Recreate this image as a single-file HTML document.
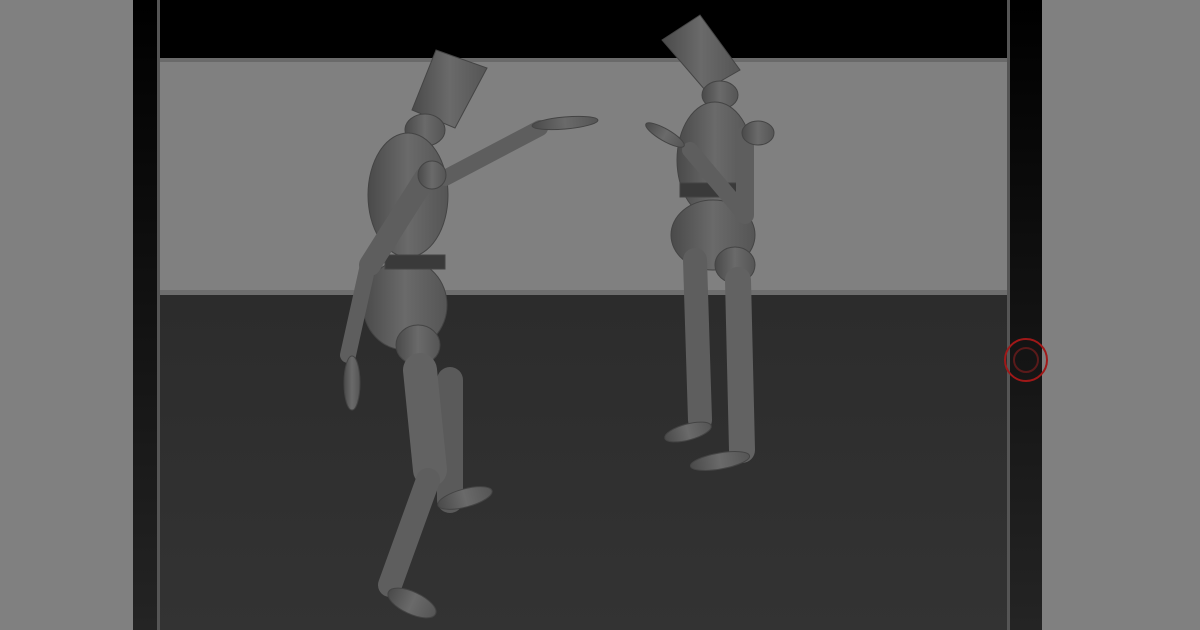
<!DOCTYPE html>
<html><head><style>
html,body{margin:0;padding:0;width:1200px;height:630px;overflow:hidden;background:#808080}
</style></head><body>
<svg width="1200" height="630" viewBox="0 0 1200 630" xmlns="http://www.w3.org/2000/svg">
<defs>
<linearGradient id="bar" x1="0" y1="0" x2="0" y2="1"><stop offset="0" stop-color="#000"/><stop offset="1" stop-color="#242424"/></linearGradient>
<linearGradient id="floor" x1="0" y1="0" x2="0" y2="1"><stop offset="0" stop-color="#2c2c2c"/><stop offset="1" stop-color="#333"/></linearGradient>
<linearGradient id="body" x1="0" y1="0" x2="1" y2="0"><stop offset="0" stop-color="#4a4a4a"/><stop offset="0.5" stop-color="#6a6a6a"/><stop offset="1" stop-color="#555"/></linearGradient>
</defs>
<rect width="1200" height="630" fill="#808080"/>
<rect x="133" y="0" width="26" height="630" fill="url(#bar)"/>
<rect x="1009" y="0" width="33" height="630" fill="url(#bar)"/>
<rect x="157" y="0" width="3" height="630" fill="#555"/>
<rect x="1007" y="0" width="3" height="630" fill="#555"/>
<rect x="160" y="0" width="847" height="58" fill="#000"/>
<rect x="160" y="58" width="847" height="4" fill="#6a6a6a"/>
<rect x="160" y="62" width="847" height="228" fill="#808080"/>
<rect x="160" y="290" width="847" height="5" fill="#6e6e6e"/>
<rect x="160" y="295" width="847" height="335" fill="url(#floor)"/>
<circle cx="1026" cy="360" r="21" fill="none" stroke="#a01818" stroke-width="2"/>
<circle cx="1026" cy="360" r="12" fill="none" stroke="#5a1a1a" stroke-width="2"/>
<g fill="url(#body)" stroke="#444" stroke-width="1" stroke-linecap="round">
<!-- figure 1 -->
<polygon points="436,50 487,68 455,128 412,110"/>
<ellipse cx="425" cy="130" rx="20" ry="16"/>
<ellipse cx="408" cy="195" rx="40" ry="62"/>
<ellipse cx="405" cy="305" rx="42" ry="45"/>
<rect x="385" y="255" width="60" height="14" fill="#3a3a3a"/>
<line x1="445" y1="178" x2="540" y2="128" stroke="#5e5e5e" stroke-width="16"/>
<ellipse cx="565" cy="123" rx="33" ry="6" transform="rotate(-5 565 123)"/>
<line x1="425" y1="178" x2="370" y2="265" stroke="#5e5e5e" stroke-width="22"/>
<line x1="368" y1="265" x2="348" y2="355" stroke="#5e5e5e" stroke-width="16"/>
<ellipse cx="352" cy="383" rx="8" ry="27"/>
<ellipse cx="432" cy="175" rx="14" ry="14"/>
<line x1="450" y1="380" x2="450" y2="500" stroke="#5a5a5a" stroke-width="26"/>
<ellipse cx="465" cy="498" rx="28" ry="9" transform="rotate(-15 465 498)"/>
<ellipse cx="418" cy="345" rx="22" ry="20"/>
<line x1="420" y1="370" x2="430" y2="470" stroke="#626262" stroke-width="34"/>
<line x1="428" y1="480" x2="390" y2="585" stroke="#5e5e5e" stroke-width="24"/>
<ellipse cx="412" cy="603" rx="26" ry="11" transform="rotate(25 412 603)"/>
<!-- figure 2 -->
<polygon points="662,40 700,15 740,70 705,90"/>
<ellipse cx="720" cy="95" rx="18" ry="14"/>
<ellipse cx="715" cy="160" rx="38" ry="58"/>
<ellipse cx="713" cy="235" rx="42" ry="35"/>
<rect x="680" y="183" width="65" height="14" fill="#3a3a3a"/>
<line x1="745" y1="135" x2="745" y2="215" stroke="#5e5e5e" stroke-width="18"/>
<line x1="745" y1="215" x2="690" y2="150" stroke="#5e5e5e" stroke-width="16"/>
<ellipse cx="665" cy="135" rx="22" ry="6" transform="rotate(30 665 135)"/>
<ellipse cx="758" cy="133" rx="16" ry="12"/>
<line x1="695" y1="260" x2="700" y2="420" stroke="#5e5e5e" stroke-width="24"/>
<ellipse cx="688" cy="432" rx="24" ry="8" transform="rotate(-15 688 432)"/>
<ellipse cx="735" cy="265" rx="20" ry="18"/>
<line x1="738" y1="280" x2="742" y2="450" stroke="#626262" stroke-width="26"/>
<ellipse cx="720" cy="461" rx="30" ry="8" transform="rotate(-10 720 461)"/>
</g>
</svg>
</body></html>
